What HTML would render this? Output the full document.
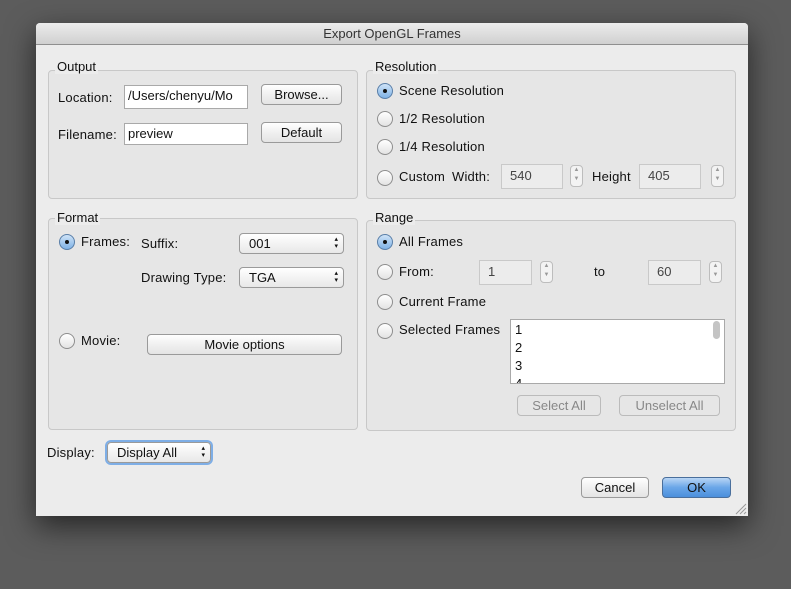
<!DOCTYPE html>
<html><head><style>
*{box-sizing:border-box;margin:0;padding:0}
body{width:791px;height:589px;background:#5c5c5c;font-family:"Liberation Sans",sans-serif;font-size:13px;color:#111;position:relative;overflow:hidden}
.win{position:absolute;left:36px;top:23px;width:712px;height:493px;background:#ececec;box-shadow:0 10px 30px rgba(0,0,0,.6);border-radius:4px 4px 0 0;overflow:hidden}
.tb{position:absolute;left:0;top:0;width:712px;height:22px;background:linear-gradient(#ececec,#d0d0d0);border-bottom:1px solid #8f8f8f;text-align:center;line-height:22px;color:#333}
.a{position:absolute;white-space:nowrap;letter-spacing:0.2px}
.box{position:absolute;border:1px solid #c8c8c8;border-radius:4px;background:#e6e6e6}
.lg{position:absolute;background:#ececec;padding:0 2px;line-height:14px}
.inp{position:absolute;background:#fff;border:1px solid #a9a9a9;padding-left:3px;line-height:19px}
.dis{position:absolute;background:#ececec;border:1px solid #c9c9c9;padding-left:8px;line-height:22px;color:#444}
.btn{position:absolute;border:1px solid #9a9a9a;border-radius:4px;background:linear-gradient(#fff,#f0f0f0 50%,#e4e4e4);text-align:center;line-height:19px}
.btn.d{color:#888;border-color:#bbb;background:#e6e6e6}
.r{position:absolute;width:16px;height:16px;border-radius:50%;border:1px solid #8e8e8e;background:linear-gradient(#fff,#e3e3e3)}
.r.on{background:linear-gradient(#cfe3f7,#7fb2e6);border-color:#5a7fa8}
.r.on:after{content:"";position:absolute;left:5px;top:5px;width:4px;height:4px;border-radius:50%;background:#111}
.st{position:absolute;width:13px;height:22px;border:1px solid #bdbdbd;border-radius:4px;background:#f3f3f3;font-size:6px;color:#999;text-align:center;line-height:9px}
.pop{position:absolute;border:1px solid #9a9a9a;border-radius:4px;background:linear-gradient(#fff,#e8e8e8);padding-left:9px;line-height:19px}
.pop:after{content:"▴\A▾";white-space:pre;position:absolute;right:5px;top:2px;font-size:7px;line-height:7px}
</style></head><body>
<div class="win">
<div class="tb">Export OpenGL Frames</div>

<div class="box" style="left:12px;top:47px;width:310px;height:129px"></div>
<div class="lg" style="left:19px;top:37px">Output</div>
<div class="a" style="left:22px;top:67px">Location:</div>
<div class="inp" style="left:88px;top:62px;width:124px;height:24px;overflow:hidden">/Users/chenyu/Mo</div>
<div class="btn" style="left:225px;top:61px;width:81px;height:21px">Browse...</div>
<div class="a" style="left:22px;top:104px">Filename:</div>
<div class="inp" style="left:88px;top:100px;width:124px;height:22px">preview</div>
<div class="btn" style="left:225px;top:99px;width:81px;height:21px">Default</div>

<div class="box" style="left:330px;top:47px;width:370px;height:129px"></div>
<div class="lg" style="left:337px;top:37px">Resolution</div>
<div class="r on" style="left:341px;top:60px"></div><div class="a" style="left:363px;top:60px">Scene Resolution</div>
<div class="r" style="left:341px;top:88px"></div><div class="a" style="left:363px;top:88px">1/2 Resolution</div>
<div class="r" style="left:341px;top:116px"></div><div class="a" style="left:363px;top:116px">1/4 Resolution</div>
<div class="r" style="left:341px;top:147px"></div><div class="a" style="left:363px;top:146px">Custom</div>
<div class="a" style="left:416px;top:146px">Width:</div>
<div class="dis" style="left:465px;top:141px;width:62px;height:25px">540</div>
<div class="st" style="left:534px;top:142px">▲<br>▼</div>
<div class="a" style="left:556px;top:146px">Height</div>
<div class="dis" style="left:603px;top:141px;width:62px;height:25px">405</div>
<div class="st" style="left:675px;top:142px">▲<br>▼</div>

<div class="box" style="left:12px;top:195px;width:310px;height:212px"></div>
<div class="lg" style="left:19px;top:188px">Format</div>
<div class="r on" style="left:23px;top:211px"></div><div class="a" style="left:45px;top:211px">Frames:</div>
<div class="a" style="left:105px;top:213px">Suffix:</div>
<div class="pop" style="left:203px;top:210px;width:105px;height:21px">001</div>
<div class="a" style="left:105px;top:247px">Drawing Type:</div>
<div class="pop" style="left:203px;top:244px;width:105px;height:21px">TGA</div>
<div class="r" style="left:23px;top:310px"></div><div class="a" style="left:45px;top:310px">Movie:</div>
<div class="btn" style="left:111px;top:311px;width:195px;height:21px">Movie options</div>

<div class="box" style="left:330px;top:197px;width:370px;height:211px"></div>
<div class="lg" style="left:337px;top:188px">Range</div>
<div class="r on" style="left:341px;top:211px"></div><div class="a" style="left:363px;top:211px">All Frames</div>
<div class="r" style="left:341px;top:241px"></div><div class="a" style="left:363px;top:241px">From:</div>
<div class="dis" style="left:443px;top:237px;width:53px;height:25px">1</div>
<div class="st" style="left:504px;top:238px">▲<br>▼</div>
<div class="a" style="left:558px;top:241px">to</div>
<div class="dis" style="left:612px;top:237px;width:53px;height:25px">60</div>
<div class="st" style="left:673px;top:238px">▲<br>▼</div>
<div class="r" style="left:341px;top:271px"></div><div class="a" style="left:363px;top:271px">Current Frame</div>
<div class="r" style="left:341px;top:300px"></div><div class="a" style="left:363px;top:299px">Selected Frames</div>
<div style="position:absolute;left:474px;top:296px;width:215px;height:65px;background:#fff;border:1px solid #a9a9a9;overflow:hidden;line-height:18px;padding:1px 4px">1<br>2<br>3<br>4</div>
<div style="position:absolute;left:677px;top:298px;width:7px;height:18px;border-radius:4px;background:#c4c4c4"></div>
<div class="btn d" style="left:481px;top:372px;width:84px;height:21px">Select All</div>
<div class="btn d" style="left:583px;top:372px;width:101px;height:21px">Unselect All</div>

<div class="a" style="left:11px;top:422px">Display:</div>
<div class="pop" style="left:71px;top:419px;width:104px;height:21px;box-shadow:0 0 0 2px #7eaee6">Display All</div>

<div class="btn" style="left:545px;top:454px;width:68px;height:21px">Cancel</div>
<div class="btn" style="left:626px;top:454px;width:69px;height:21px;background:linear-gradient(#b9d6f5,#6aa6e8 50%,#4b8fdc);border-color:#4a6f9c">OK</div>
<svg style="position:absolute;left:698px;top:479px" width="13" height="13"><path d="M2 12L12 2M6 12L12 6M10 12L12 10" stroke="#999" stroke-width="1"/></svg>
</div>
</body></html>
